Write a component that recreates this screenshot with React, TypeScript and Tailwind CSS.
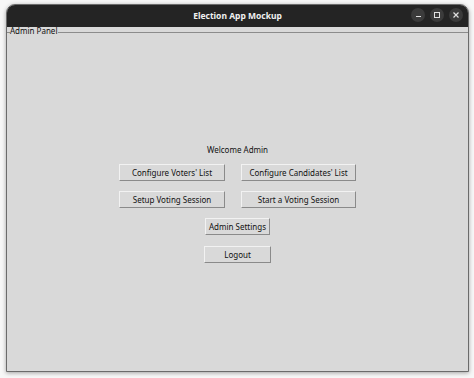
const TkButton = ({ label, className = "" }: { label: string; className?: string }) => {
  return (
    <button
      className={`h-[17px] whitespace-nowrap border border-t-[#f2f2f2] border-l-[#f2f2f2] border-b-[#8a8a8a] border-r-[#8a8a8a] bg-[#d9d9d9] px-0 text-[8px] leading-none text-[#111] ${className}`}
    >
      {label}
    </button>
  );
};

export default function App() {
  return (
    <div
      className="h-[378px] w-[474px] bg-[#f7f7f7] pt-[4px] pl-[6px]"
      style={{ fontFamily: '"Noto Sans", "DejaVu Sans", sans-serif' }}
    >
      <div className="flex h-[368px] w-[463px] flex-col overflow-hidden rounded-t-[9px] border border-[#6b6b6b] bg-[#d9d9d9] shadow-[0_1px_4px_rgba(0,0,0,0.35)]">
        {/* title bar */}
        <div className="relative flex h-[22px] shrink-0 items-center justify-center bg-[#242424]">
          <span className="text-[8.5px] font-bold text-[#f0f0f0]">Election App Mockup</span>
          <div className="absolute right-[5px] top-[3px] flex gap-[5px]">
            <div className="flex h-[14px] w-[14px] items-center justify-center rounded-full bg-[#3b3b3b]">
              <div className="mt-[3px] h-[1px] w-[5px] bg-[#e0e0e0]" />
            </div>
            <div className="flex h-[14px] w-[14px] items-center justify-center rounded-full bg-[#3b3b3b]">
              <div className="h-[6px] w-[6px] border border-[#e0e0e0]" />
            </div>
            <div className="flex h-[14px] w-[14px] items-center justify-center rounded-full bg-[#3b3b3b]">
              <svg width="6" height="6" viewBox="0 0 6 6">
                <path d="M0.5 0.5L5.5 5.5M5.5 0.5L0.5 5.5" stroke="#e0e0e0" strokeWidth="1.2" />
              </svg>
            </div>
          </div>
        </div>

        {/* group box */}
        <div className="relative mt-[5px] flex-1 border-t border-[#8c8c8c]">
          <span className="absolute -top-[6px] left-[3px] bg-[#d9d9d9] pr-[1px] text-[8px] leading-none text-[#111]">
            Admin Panel
          </span>
          <div className="flex flex-col items-center pt-[113px]">
            <span className="text-[8px] leading-none text-[#111]">Welcome Admin</span>
            <div className="mt-[10px] grid grid-cols-[106px_115px] gap-x-[16px] gap-y-[10px]">
              <TkButton label="Configure Voters' List" className="w-full" />
              <TkButton label="Configure Candidates' List" className="w-full" />
              <TkButton label="Setup Voting Session" className="w-full" />
              <TkButton label="Start a Voting Session" className="w-full" />
            </div>
            <TkButton label="Admin Settings" className="mt-[10px] w-[65px]" />
            <TkButton label="Logout" className="mt-[11px] w-[67px]" />
          </div>
        </div>
      </div>
    </div>
  );
}
